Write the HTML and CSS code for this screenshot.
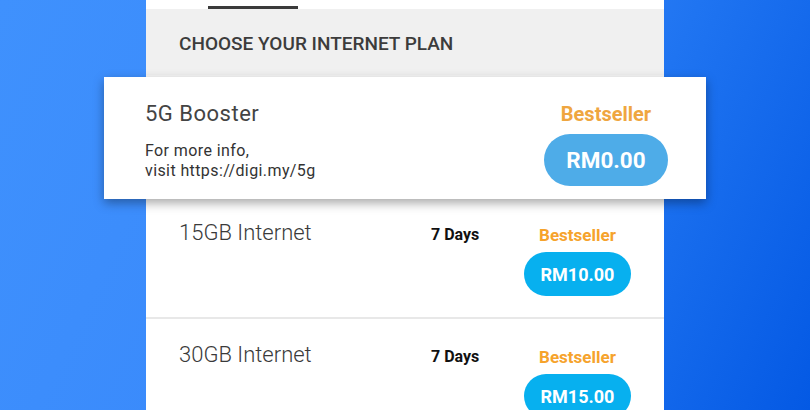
FILE: index.html
```html
<!DOCTYPE html>
<html>
<head>
<meta charset="utf-8">
<link rel="stylesheet" href="styles.css">
</head>
<body>
<div class="stage">
  <div class="panel">
    <div class="tabs"><span class="tab-line"></span></div>
    <div class="header">CHOOSE YOUR INTERNET PLAN</div>
    <div class="card">
      <div class="card-info">
        <div class="card-title">5G Booster</div>
        <div class="card-desc">For more info,<br>visit https://digi.my/5g</div>
      </div>
      <div class="card-price">
        <div class="badge badge-lg">Bestseller</div>
        <div class="price price-lg">RM0.00</div>
      </div>
    </div>
    <div class="row">
      <div class="row-name">15GB Internet</div>
      <div class="row-days">7 Days</div>
      <div class="row-price">
        <div class="badge">Bestseller</div>
        <div class="price">RM10.00</div>
      </div>
    </div>
    <div class="row row-last">
      <div class="row-name">30GB Internet</div>
      <div class="row-days">7 Days</div>
      <div class="row-price">
        <div class="badge">Bestseller</div>
        <div class="price">RM15.00</div>
      </div>
    </div>
  </div>
</div>
</body>
</html>
```
FILE: styles.css
```css
html, body {
  margin: 0;
  padding: 0;
}
body {
  width: 810px;
  height: 410px;
  overflow: hidden;
  font-family: Roboto, "Liberation Sans", sans-serif;
  background: linear-gradient(115deg, #3f91fd 0%, #3989fb 45%, #1f74f1 70%, #0459e4 100%);
}
.stage {
  display: flex;
  justify-content: center;
  height: 410px;
}
.panel {
  width: 518px;
  height: 410px;
  background: #f7f7f7;
  display: flex;
  flex-direction: column;
}
.panel > * {
  flex: none;
}
.tabs {
  height: 9px;
  background: #fff;
  display: flex;
  align-items: flex-end;
  padding-left: 62px;
}
.tab-line {
  width: 90px;
  height: 3px;
  background: #3a3a3a;
}
.header {
  height: 66px;
  box-sizing: border-box;
  background: #f0f0f0;
  padding: 24px 0 0 33px;
  font-size: 19px;
  line-height: 22px;
  font-weight: 500;
  color: #3c3c3c;
}
.card {
  position: relative;
  z-index: 1;
  margin: 2px -42px -2px;
  height: 122px;
  box-sizing: border-box;
  background: #fff;
  box-shadow: 0 4px 10px rgba(0, 0, 0, 0.35);
  display: flex;
  justify-content: space-between;
  padding: 23px 38px 0 41px;
}
.card-title {
  font-size: 22px;
  color: #444;
  font-weight: 400;
  line-height: 28px;
  letter-spacing: 0.5px;
}
.card-desc {
  margin-top: 13px;
  font-size: 16px;
  line-height: 20px;
  color: #333;
  letter-spacing: 0.4px;
}
.card-price {
  width: 124px;
  display: flex;
  flex-direction: column;
  align-items: center;
  padding-top: 2px;
}
.badge {
  color: #f6a32c;
  font-weight: 700;
  font-size: 17px;
  line-height: 20px;
}
.badge-lg {
  color: #efa640;
  font-size: 20px;
  line-height: 24px;
}
.price {
  margin-top: 7px;
  width: 107px;
  height: 44px;
  border-radius: 22px;
  background: #07b0ef;
  color: #fff;
  font-weight: 700;
  font-size: 18px;
  display: flex;
  align-items: center;
  justify-content: center;
}
.price-lg {
  margin-top: 8px;
  width: 124px;
  height: 52px;
  border-radius: 26px;
  background: #4eace8;
  font-size: 22.5px;
}
.row {
  height: 122px;
  box-sizing: border-box;
  background: #fff;
  border-bottom: 2px solid #e8e8e8;
  display: flex;
  align-items: flex-start;
  padding: 22px 33px 0 33px;
}
.row-last {
  height: 91px;
  border-bottom: 0;
  overflow: hidden;
}
.row-name {
  flex: 1;
  font-size: 22px;
  font-weight: 300;
  color: #3a3a3a;
  line-height: 28px;
}
.row-days {
  width: 93px;
  font-size: 16px;
  line-height: 20px;
  font-weight: 700;
  color: #111;
  padding-top: 6px;
}
.row-price {
  width: 107px;
  display: flex;
  flex-direction: column;
  align-items: center;
  padding-top: 6px;
}
```
